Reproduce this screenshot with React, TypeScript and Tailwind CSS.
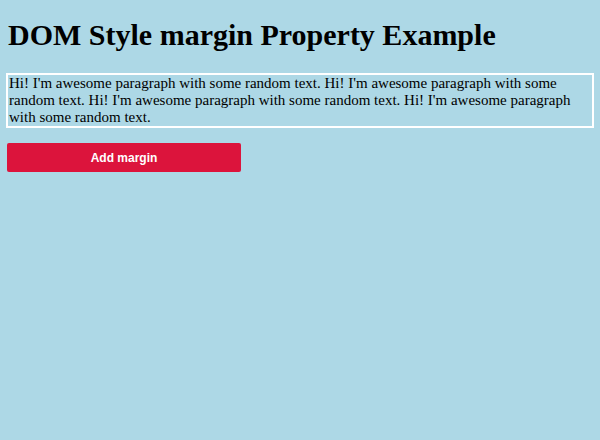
import React, { useState } from 'react';

const text =
  "Hi! I'm awesome paragraph with some random text. Hi! I'm awesome paragraph with some random text. Hi! I'm awesome paragraph with some random text. Hi! I'm awesome paragraph with some random text.";

export default function App() {
  const [spaced, setSpaced] = useState(false);

  return (
    <div className="min-h-[440px] bg-[#add8e6] px-[8px] pt-[17px] font-['Liberation_Serif',serif] text-black">
      <h1 className="text-[30px] leading-[36px] font-bold">DOM Style margin Property Example</h1>
      <p
        className={
          'mt-[20px] -ml-[2px] w-[588px] border-2 border-white px-[1px] text-[15px] leading-[17px] ' +
          (spaced ? 'my-[40px]' : '')
        }
      >
        {text}
      </p>
      <button
        onClick={() => setSpaced(true)}
        className="mt-[15px] -ml-[1px] flex h-[29px] w-[234px] items-center justify-center rounded-[2px] bg-[#dc143c] font-['Liberation_Sans',sans-serif] text-[12px] font-bold text-white"
      >
        Add margin
      </button>
    </div>
  );
}
